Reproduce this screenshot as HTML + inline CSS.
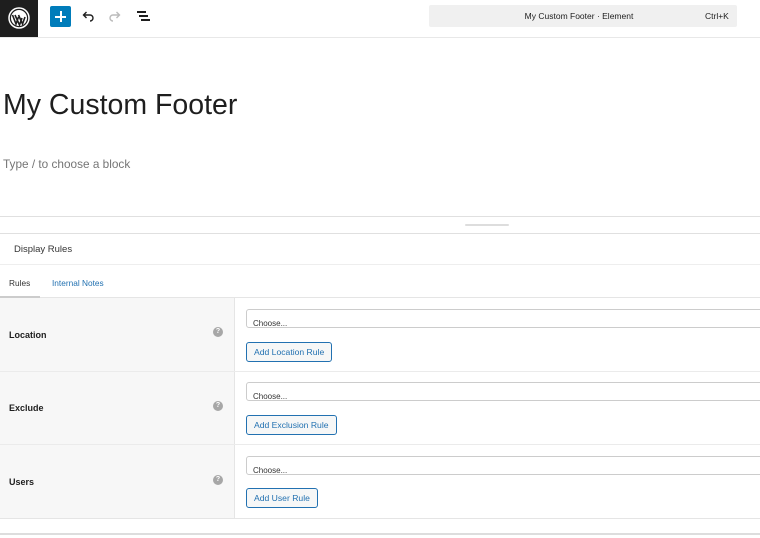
<!DOCTYPE html>
<html><head><style>
*{box-sizing:border-box;margin:0;padding:0}
body{width:760px;height:538px;overflow:hidden;background:#fff;font-family:"Liberation Sans",sans-serif;position:relative;color:#1e1e1e}
.a{position:absolute}
.hl{position:absolute;left:0;width:760px;height:1px;background:#e0e0e0}
.lbl{position:absolute;left:9px;font-size:9px;font-weight:bold;color:#1e1e1e}
.q{position:absolute;left:213px;width:10px;height:10px;border-radius:50%;background:#a7a7a7;color:#fff;font-size:7px;font-weight:bold;text-align:center;line-height:10px}
.sel{position:absolute;left:246px;width:520px;height:19px;border:1px solid #ccc;border-radius:3px;font-size:8px;padding:10px 0 0 6px;line-height:8px;color:#333}
.btn{position:absolute;left:246px;height:20px;border:1px solid #2271b1;border-radius:3px;font-size:8.6px;color:#2271b1;padding:0 7px;line-height:18px;background:#f6f7f7}
</style></head><body>
<div class="a" style="left:0;top:0;width:38px;height:37px;background:#1e1e1e"></div>
<svg class="a" style="left:8px;top:7px" width="22" height="22" viewBox="0 0 22 22"><circle cx="11" cy="11" r="10" fill="none" stroke="#fff" stroke-width="1.5"/><circle cx="11" cy="11" r="8" fill="#fff"/><path d="M4.5 8 L8 17 L10.5 10 M7 8 L11.5 18 L14 11 M10.5 8 L14.5 17 L17 10" stroke="#1e1e1e" stroke-width="1.6" fill="none"/></svg>
<div class="a" style="left:50px;top:6px;width:21px;height:21px;background:#007cba;border-radius:2px"></div>
<div class="a" style="left:55px;top:16px;width:11px;height:1.5px;background:#fff"></div>
<div class="a" style="left:60px;top:11px;width:1.5px;height:11px;background:#fff"></div>
<svg class="a" style="left:81px;top:9px" width="14" height="14" viewBox="0 0 14 14"><path d="M3 6 H9 A3 3 0 0 1 9 12 M5.5 3 L2.5 6 L5.5 9" stroke="#1e1e1e" stroke-width="1.4" fill="none"/></svg>
<svg class="a" style="left:108px;top:9px" width="14" height="14" viewBox="0 0 14 14"><path d="M11 6 H5 A3 3 0 0 0 5 12 M8.5 3 L11.5 6 L8.5 9" stroke="#bbb" stroke-width="1.4" fill="none"/></svg>
<div class="a" style="left:137px;top:11px;width:9px;height:1.5px;background:#1e1e1e"></div>
<div class="a" style="left:139px;top:15px;width:9px;height:1.5px;background:#1e1e1e"></div>
<div class="a" style="left:141px;top:19px;width:9px;height:1.5px;background:#1e1e1e"></div>
<div class="a" style="left:429px;top:5px;width:308px;height:22px;background:#f0f0f0;border-radius:2px"></div>
<div class="a" style="left:429px;top:11px;width:300px;text-align:center;font-size:8.5px;color:#1e1e1e">My Custom Footer · Element</div>
<div class="a" style="left:705px;top:11px;font-size:8.5px">Ctrl+K</div>
<div class="hl" style="top:37px;background:#e8e8e8"></div>
<div class="a" style="left:3px;top:89px;font-size:28.5px;color:#1e1e1e">My Custom Footer</div>
<div class="a" style="left:3px;top:157px;font-size:11.8px;color:#757575">Type / to choose a block</div>
<div class="hl" style="top:216px"></div>
<div class="a" style="left:465px;top:224px;width:44px;height:2px;background:#ddd;border-radius:1px"></div>
<div class="hl" style="top:233px"></div>
<div class="a" style="left:14px;top:244px;font-size:9.5px;color:#333">Display Rules</div>
<div class="hl" style="top:264px;background:#eee"></div>
<div class="a" style="left:9px;top:278px;font-size:8.3px;color:#333">Rules</div>
<div class="a" style="left:52px;top:278px;font-size:8.3px;color:#2271b1">Internal Notes</div>
<div class="hl" style="top:297px;background:#e5e5e5"></div>
<div class="a" style="left:0;top:296px;width:40px;height:2px;background:#ccc"></div>
<div class="a" style="left:0;top:298px;width:234px;height:220px;background:#f7f7f7"></div>
<div class="a" style="left:234px;top:298px;width:1px;height:220px;background:#e5e5e5"></div>
<div class="hl" style="top:371px;background:#ebebeb"></div>
<div class="hl" style="top:444px;background:#ebebeb"></div>
<div class="hl" style="top:518px;background:#e5e5e5"></div>
<div class="hl" style="top:533px;background:#ddd;height:2px"></div>
<div class="lbl" style="top:330px">Location</div><div class="q" style="top:327px">?</div>
<div class="sel" style="top:309px">Choose...</div><div class="btn" style="top:342px">Add Location Rule</div>
<div class="lbl" style="top:403px">Exclude</div><div class="q" style="top:401px">?</div>
<div class="sel" style="top:382px">Choose...</div><div class="btn" style="top:415px">Add Exclusion Rule</div>
<div class="lbl" style="top:477px">Users</div><div class="q" style="top:475px">?</div>
<div class="sel" style="top:456px">Choose...</div><div class="btn" style="top:488px">Add User Rule</div>
</body></html>
